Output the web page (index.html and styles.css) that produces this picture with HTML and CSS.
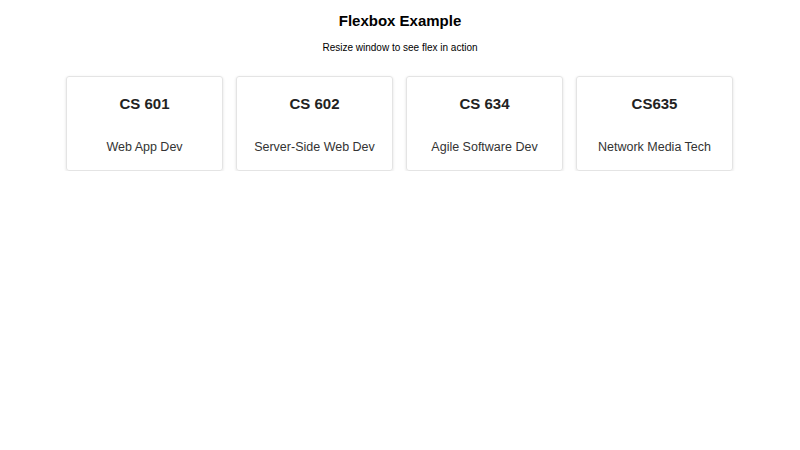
FILE: index.html
```html
<!DOCTYPE html>
<html lang="en">
<head>
  <meta charset="UTF-8">
  <meta name="viewport" content="width=device-width, initial-scale=1.0">
  <title>Flexbox Example</title>
  <link rel="stylesheet" href="styles.css">
</head>
<body>
  <header class="header">
    <h1>Flexbox Example</h1>
    <p class="subtitle">Resize window to see flex in action</p>
  </header>
  <div class="courses">
    <div class="course">
      <h2>CS 601</h2>
      <p>Web App Dev</p>
    </div>
    <div class="course">
      <h2>CS 602</h2>
      <p>Server-Side Web Dev</p>
    </div>
    <div class="course">
      <h2>CS 634</h2>
      <p>Agile Software Dev</p>
    </div>
    <div class="course">
      <h2>CS635</h2>
      <p>Network Media Tech</p>
    </div>
  </div>
</body>
</html>
```

FILE: styles.css
```css
body {
  margin: 0;
  font-family: "Liberation Sans", Arial, sans-serif;
  background: #fff;
  color: #333;
}
.header {
  text-align: center;
  padding-top: 12px;
}
h1 {
  margin: 0;
  font-size: 15px;
  line-height: 18px;
  color: #000;
}
.subtitle {
  margin: 12px 0 0;
  font-size: 10px;
  line-height: 12px;
  color: #000;
}
.courses {
  display: flex;
  justify-content: center;
  gap: 13px;
  margin-top: 22px;
  padding-right: 1px;
}
.course {
  width: 155px;
  padding: 18px 0 15px;
  border: 1px solid #e4e4e4;
  border-radius: 3px;
  box-shadow: 0 1px 3px rgba(0, 0, 0, 0.12);
  text-align: center;
}
.course h2 {
  margin: 0;
  font-size: 15px;
  line-height: 18px;
  color: #222;
}
.course p {
  margin: 26px 0 0;
  font-size: 12.5px;
  line-height: 16px;
  color: #333;
}
```
